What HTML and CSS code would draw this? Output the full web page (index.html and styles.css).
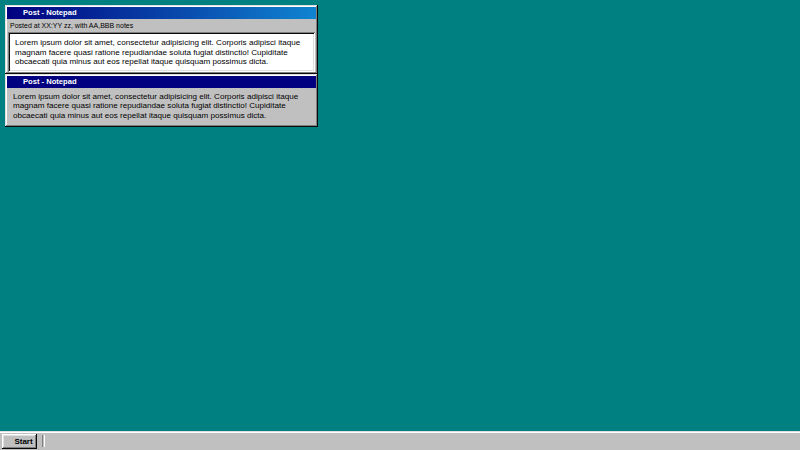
FILE: index.html
```html
<!DOCTYPE html>
<html>
<head>
<meta charset="utf-8">
<title>Desktop</title>
<link rel="stylesheet" href="styles.css">
</head>
<body>
<div class="desktop">
  <div class="window">
    <div class="title-bar active">Post - Notepad</div>
    <div class="meta">Posted at XX:YY zz, with AA,BBB notes</div>
    <div class="content sunken">Lorem ipsum dolor sit amet, consectetur adipisicing elit. Corporis adipisci itaque magnam facere quasi ratione repudiandae soluta fugiat distinctio! Cupiditate obcaecati quia minus aut eos repellat itaque quisquam possimus dicta.</div>
  </div>
  <div class="window">
    <div class="title-bar">Post - Notepad</div>
    <div class="content plain">Lorem ipsum dolor sit amet, consectetur adipisicing elit. Corporis adipisci itaque magnam facere quasi ratione repudiandae soluta fugiat distinctio! Cupiditate obcaecati quia minus aut eos repellat itaque quisquam possimus dicta.</div>
  </div>
</div>
<div class="taskbar">
  <button class="start">Start</button>
  <div class="divider"></div>
</div>
</body>
</html>
```
FILE: styles.css
```css
html, body {
  margin: 0;
  height: 100%;
}
body {
  background: #008080;
  font-family: "Liberation Sans", Arial, sans-serif;
  display: flex;
  flex-direction: column;
  overflow: hidden;
}
.desktop {
  flex: 1;
  padding: 5px;
  display: flex;
  flex-direction: column;
  align-items: flex-start;
}
.window {
  width: 313px;
  box-sizing: border-box;
  background: #c0c0c0;
  padding: 2px;
  box-shadow: inset -1px -1px #0a0a0a, inset 1px 1px #dfdfdf,
              inset -2px -2px #808080, inset 2px 2px #ffffff;
}
.title-bar {
  height: 12px;
  line-height: 12px;
  padding-left: 16px;
  color: #fff;
  font-weight: bold;
  font-size: 7.6px;
  background: #000080;
}
.title-bar.active {
  background: linear-gradient(90deg, #000080, #1084d0);
}
.meta {
  font-size: 7px;
  padding: 0 3px;
  height: 13px;
  line-height: 13px;
  color: #000;
}
.content {
  font-size: 8.1px;
  line-height: 9.6px;
  color: #000;
}
.sunken {
  margin: 0 1px;
  background: #fff;
  padding: 6px 6px 5px 7px;
  box-shadow: inset 1px 1px #808080, inset -1px -1px #ffffff,
              inset 2px 2px #0a0a0a, inset -2px -2px #dfdfdf;
}
.plain {
  padding: 4px 6px 4px 6px;
}
.taskbar {
  height: 18px;
  background: #c0c0c0;
  border-top: 1px solid #dfdfdf;
  box-shadow: inset 0 1px #fff;
  display: flex;
  align-items: center;
  padding: 0 2px;
  gap: 5px;
}
.start {
  width: 35px;
  height: 15px;
  padding: 0 0 0 8px;
  border: none;
  background: #c0c0c0;
  font-family: "Liberation Sans", Arial, sans-serif;
  font-weight: bold;
  font-size: 8px;
  text-align: center;
  color: #000;
  box-shadow: inset -1px -1px #0a0a0a, inset 1px 1px #ffffff,
              inset -2px -2px #808080, inset 2px 2px #dfdfdf;
}
.divider {
  width: 1px;
  height: 12px;
  border-left: 1px solid #808080;
  border-right: 1px solid #ffffff;
}
```
